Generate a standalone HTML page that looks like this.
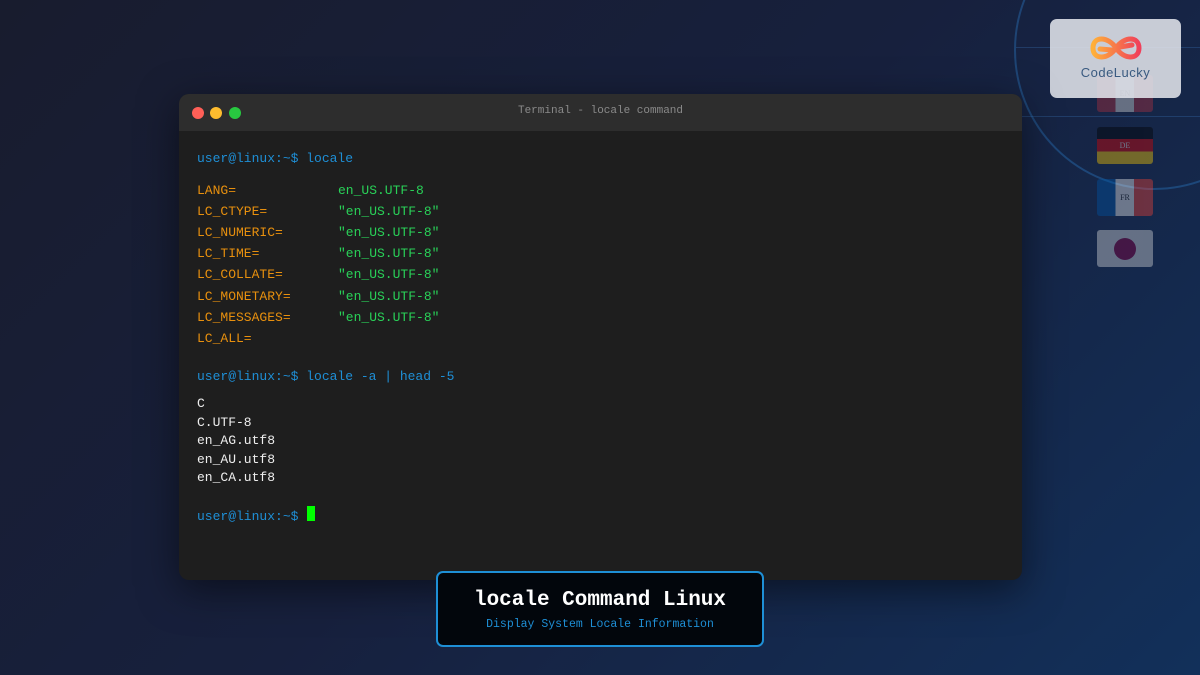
<!DOCTYPE html>
<html><head><style>
*{margin:0;padding:0;box-sizing:border-box}
body{width:1200px;height:675px;overflow:hidden;position:relative;background:linear-gradient(135deg,#181c2e 0%,#17203d 50%,#12305a 100%);font-family:"Liberation Mono",monospace}
.circ{position:absolute;left:1014px;top:-90px;width:280px;height:280px;border:2px solid rgba(40,110,180,.45);border-radius:50%}
.hl{position:absolute;left:1016px;width:184px;height:1px;background:rgba(60,120,190,.3)}
.term{position:absolute;left:179px;top:94px;width:843px;height:486px;background:#1e1e1e;border-radius:10px;overflow:hidden;box-shadow:0 10px 40px rgba(0,0,0,.5)}
.bar{height:37px;background:#2d2d2d;position:relative}
.dot{position:absolute;top:13px;width:12px;height:12px;border-radius:50%}
.ttl{position:absolute;left:0;right:0;top:11px;text-align:center;color:#8a8a8a;font-size:11px}
.t{position:absolute;font-size:13px;white-space:pre}
.p{color:#1e8fd6}.o{color:#e8900e}.g{color:#29d158}.w{color:#eee}
.flag{position:absolute;left:1097px;width:56px;height:37px;border-radius:3px;overflow:hidden;opacity:.4;font-family:"Liberation Serif",serif;font-size:8px;color:#222;display:flex;align-items:center;justify-content:center}
.logo{position:absolute;left:1050px;top:19px;width:131px;height:79px;background:rgba(225,228,235,.88);border-radius:7px;text-align:center}
.box{position:absolute;left:436px;top:571px;width:328px;height:76px;background:#02060c;border:2px solid #1e8fd6;border-radius:7px;text-align:center}
</style></head><body>
<div class="circ"></div>
<div class="hl" style="top:47px"></div><div class="hl" style="top:116px"></div>
<div class="flag" style="top:75px;background:linear-gradient(90deg,#b03040 33%,#ddd 33% 66%,#b03040 66%)">EN</div>
<div class="flag" style="top:127px;background:linear-gradient(#000 33%,#d00 33% 66%,#ffce00 66%);color:#eee">DE</div>
<div class="flag" style="top:179px;background:linear-gradient(90deg,#0055a4 33%,#eee 33% 66%,#ef4135 66%)">FR</div>
<div class="flag" style="top:230px;background:#ddd"><div style="width:22px;height:22px;border-radius:50%;background:#8a0040"></div></div>
<div class="logo">
<svg width="60" height="30" viewBox="0 0 60 30" style="margin-top:14px"><defs><linearGradient id="lg" x1="0" x2="1"><stop offset="0" stop-color="#ffb03a"/><stop offset="1" stop-color="#f0405a"/></linearGradient></defs><path d="M30 15 C22 3 7 3 7 15 C7 27 22 27 30 15 C38 3 53 3 53 15 C53 27 38 27 30 15 M14 16 L26 17 M34 14 L46 12" fill="none" stroke="url(#lg)" stroke-width="5" stroke-linecap="round"/></svg>
<div style="font-family:'Liberation Sans',sans-serif;font-size:13px;color:#3a5a80;margin-top:-3px;letter-spacing:.5px">CodeLucky</div>
</div>
<div class="term">
<div class="bar"><div class="dot" style="left:13px;background:#ff5f57"></div><div class="dot" style="left:31px;background:#febc2e"></div><div class="dot" style="left:50px;background:#28c840"></div><div class="ttl">Terminal - locale command</div></div>
<div class="t p" style="left:18px;top:57px">user@linux:~$ locale</div>
<div class="t o" style="left:18px;top:89px">LANG=</div><div class="t g" style="left:159px;top:89px">en_US.UTF-8</div>
<div class="t o" style="left:18px;top:110px">LC_CTYPE=</div><div class="t g" style="left:159px;top:110px">"en_US.UTF-8"</div>
<div class="t o" style="left:18px;top:131px">LC_NUMERIC=</div><div class="t g" style="left:159px;top:131px">"en_US.UTF-8"</div>
<div class="t o" style="left:18px;top:152px">LC_TIME=</div><div class="t g" style="left:159px;top:152px">"en_US.UTF-8"</div>
<div class="t o" style="left:18px;top:173px">LC_COLLATE=</div><div class="t g" style="left:159px;top:173px">"en_US.UTF-8"</div>
<div class="t o" style="left:18px;top:195px">LC_MONETARY=</div><div class="t g" style="left:159px;top:195px">"en_US.UTF-8"</div>
<div class="t o" style="left:18px;top:216px">LC_MESSAGES=</div><div class="t g" style="left:159px;top:216px">"en_US.UTF-8"</div>
<div class="t o" style="left:18px;top:237px">LC_ALL=</div>
<div class="t p" style="left:18px;top:275px">user@linux:~$ locale -a | head -5</div>
<div class="t w" style="left:18px;top:301px;line-height:18.5px">C
C.UTF-8
en_AG.utf8
en_AU.utf8
en_CA.utf8</div>
<div class="t p" style="left:18px;top:415px">user@linux:~$</div>
<div style="position:absolute;left:128px;top:412px;width:8px;height:15px;background:#0f0"></div>
</div>
<div class="box">
<div style="color:#fff;font-weight:bold;font-size:21px;margin-top:16px">locale Command Linux</div>
<div style="color:#1e8fd6;font-size:11.5px;margin-top:6px">Display System Locale Information</div>
</div>
</body></html>
